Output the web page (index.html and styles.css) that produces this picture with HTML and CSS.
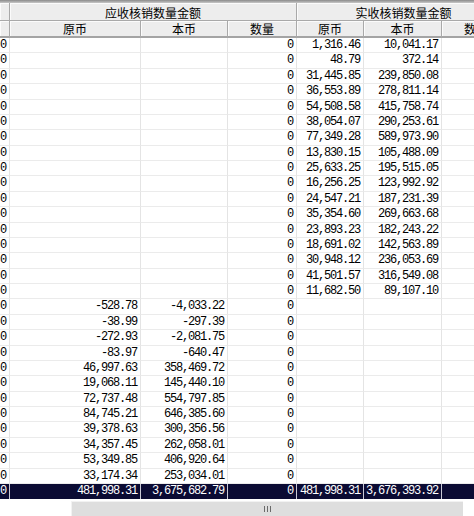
FILE: index.html
```html
<!DOCTYPE html>
<html lang="zh-CN">
<head>
<meta charset="utf-8">
<title>核销数量金额</title>
<link rel="stylesheet" href="styles.css">
</head>
<body>
<div class="sheet">
  <div class="topshade"></div>
  <div class="grid">
    <div class="hd h1"></div>
    <div class="hd h1 group">应收核销数量金额</div>
    <div class="hd h1 group">实收核销数量金额</div>

    <div class="hd h2"></div>
    <div class="hd h2">原币</div>
    <div class="hd h2">本币</div>
    <div class="hd h2">数量</div>
    <div class="hd h2">原币</div>
    <div class="hd h2">本币</div>
    <div class="hd h2">数量</div>

    <div class="c">0</div><div class="c"></div><div class="c"></div><div class="c">0</div><div class="c">1,316.46</div><div class="c">10,041.17</div><div class="c"></div>
    <div class="c">0</div><div class="c"></div><div class="c"></div><div class="c">0</div><div class="c">48.79</div><div class="c">372.14</div><div class="c"></div>
    <div class="c">0</div><div class="c"></div><div class="c"></div><div class="c">0</div><div class="c">31,445.85</div><div class="c">239,850.08</div><div class="c"></div>
    <div class="c">0</div><div class="c"></div><div class="c"></div><div class="c">0</div><div class="c">36,553.89</div><div class="c">278,811.14</div><div class="c"></div>
    <div class="c">0</div><div class="c"></div><div class="c"></div><div class="c">0</div><div class="c">54,508.58</div><div class="c">415,758.74</div><div class="c"></div>
    <div class="c">0</div><div class="c"></div><div class="c"></div><div class="c">0</div><div class="c">38,054.07</div><div class="c">290,253.61</div><div class="c"></div>
    <div class="c">0</div><div class="c"></div><div class="c"></div><div class="c">0</div><div class="c">77,349.28</div><div class="c">589,973.90</div><div class="c"></div>
    <div class="c">0</div><div class="c"></div><div class="c"></div><div class="c">0</div><div class="c">13,830.15</div><div class="c">105,488.09</div><div class="c"></div>
    <div class="c">0</div><div class="c"></div><div class="c"></div><div class="c">0</div><div class="c">25,633.25</div><div class="c">195,515.05</div><div class="c"></div>
    <div class="c">0</div><div class="c"></div><div class="c"></div><div class="c">0</div><div class="c">16,256.25</div><div class="c">123,992.92</div><div class="c"></div>
    <div class="c">0</div><div class="c"></div><div class="c"></div><div class="c">0</div><div class="c">24,547.21</div><div class="c">187,231.39</div><div class="c"></div>
    <div class="c">0</div><div class="c"></div><div class="c"></div><div class="c">0</div><div class="c">35,354.60</div><div class="c">269,663.68</div><div class="c"></div>
    <div class="c">0</div><div class="c"></div><div class="c"></div><div class="c">0</div><div class="c">23,893.23</div><div class="c">182,243.22</div><div class="c"></div>
    <div class="c">0</div><div class="c"></div><div class="c"></div><div class="c">0</div><div class="c">18,691.02</div><div class="c">142,563.89</div><div class="c"></div>
    <div class="c">0</div><div class="c"></div><div class="c"></div><div class="c">0</div><div class="c">30,948.12</div><div class="c">236,053.69</div><div class="c"></div>
    <div class="c">0</div><div class="c"></div><div class="c"></div><div class="c">0</div><div class="c">41,501.57</div><div class="c">316,549.08</div><div class="c"></div>
    <div class="c">0</div><div class="c"></div><div class="c"></div><div class="c">0</div><div class="c">11,682.50</div><div class="c">89,107.10</div><div class="c"></div>

    <div class="c">0</div><div class="c">-528.78</div><div class="c">-4,033.22</div><div class="c">0</div><div class="c"></div><div class="c"></div><div class="c"></div>
    <div class="c">0</div><div class="c">-38.99</div><div class="c">-297.39</div><div class="c">0</div><div class="c"></div><div class="c"></div><div class="c"></div>
    <div class="c">0</div><div class="c">-272.93</div><div class="c">-2,081.75</div><div class="c">0</div><div class="c"></div><div class="c"></div><div class="c"></div>
    <div class="c">0</div><div class="c">-83.97</div><div class="c">-640.47</div><div class="c">0</div><div class="c"></div><div class="c"></div><div class="c"></div>
    <div class="c">0</div><div class="c">46,997.63</div><div class="c">358,469.72</div><div class="c">0</div><div class="c"></div><div class="c"></div><div class="c"></div>
    <div class="c">0</div><div class="c">19,068.11</div><div class="c">145,440.10</div><div class="c">0</div><div class="c"></div><div class="c"></div><div class="c"></div>
    <div class="c">0</div><div class="c">72,737.48</div><div class="c">554,797.85</div><div class="c">0</div><div class="c"></div><div class="c"></div><div class="c"></div>
    <div class="c">0</div><div class="c">84,745.21</div><div class="c">646,385.60</div><div class="c">0</div><div class="c"></div><div class="c"></div><div class="c"></div>
    <div class="c">0</div><div class="c">39,378.63</div><div class="c">300,356.56</div><div class="c">0</div><div class="c"></div><div class="c"></div><div class="c"></div>
    <div class="c">0</div><div class="c">34,357.45</div><div class="c">262,058.01</div><div class="c">0</div><div class="c"></div><div class="c"></div><div class="c"></div>
    <div class="c">0</div><div class="c">53,349.85</div><div class="c">406,920.64</div><div class="c">0</div><div class="c"></div><div class="c"></div><div class="c"></div>
    <div class="c">0</div><div class="c">33,174.34</div><div class="c">253,034.01</div><div class="c">0</div><div class="c"></div><div class="c"></div><div class="c"></div>

    <div class="c t">0</div><div class="c t">481,998.31</div><div class="c t">3,675,682.79</div><div class="c t">0</div><div class="c t">481,998.31</div><div class="c t">3,676,393.92</div><div class="c t"></div>
  </div>
  <div class="hscroll">
    <div class="thumb"><span class="grip"></span></div>
  </div>
</div>
</body>
</html>
```

FILE: styles.css
```css
html, body {
  margin: 0;
  padding: 0;
  background: #ffffff;
}

.sheet {
  width: 474px;
  height: 516px;
  overflow: hidden;
  background: #ffffff;
}

.topshade {
  height: 3px;
  background: linear-gradient(to bottom, #8a8a8a, #c8c8c8);
}

.grid {
  width: 511px;
  display: grid;
  grid-template-columns: 10px 131px 87px 69px 67px 78px 69px;
  grid-template-rows: 18px 17px repeat(29, 15.38px) 15px;
  font-family: "Liberation Mono", "DejaVu Sans Mono", monospace;
  font-size: 12px;
  color: #000000;
}

.hd {
  box-sizing: border-box;
  background: #ededed;
  border-right: 1px solid #a9a9a9;
  border-bottom: 1px solid #a9a9a9;
  box-shadow: inset 1px 1px 0 #fbfbfb;
  font-family: "Noto Sans CJK SC", "Noto Sans", sans-serif;
  font-size: 12px;
  line-height: 16px;
  text-align: center;
  color: #000000;
  overflow: hidden;
  white-space: nowrap;
}

.h1 {
  padding-top: 2px;
}

.group {
  grid-column: span 3;
}

.h2 {
  border-bottom: 2px solid #a4a4a4;
  line-height: 15px;
}

.c {
  box-sizing: border-box;
  border-right: 1px solid #e4e4e4;
  border-bottom: 1px solid #ebebeb;
  padding-right: 3px;
  text-align: right;
  letter-spacing: -1.2px;
  line-height: 14px;
  white-space: nowrap;
  overflow: hidden;
}

.t {
  background: #0b0b33;
  color: #ffffff;
  border-right: 1px solid #c9c9d6;
  border-bottom: none;
  line-height: 15px;
}

.hscroll {
  display: flex;
  padding-top: 2px;
  padding-left: 71px;
}

.thumb {
  width: 392px;
  height: 16px;
  box-sizing: border-box;
  background: #dedede;
  border-top: 1px solid #f2f2f2;
  border-left: 1px solid #f2f2f2;
  display: flex;
  align-items: center;
  justify-content: center;
}

.grip {
  width: 7px;
  height: 6px;
  background: repeating-linear-gradient(to right, #6a6a6a 0 1px, transparent 1px 3px);
}
```
